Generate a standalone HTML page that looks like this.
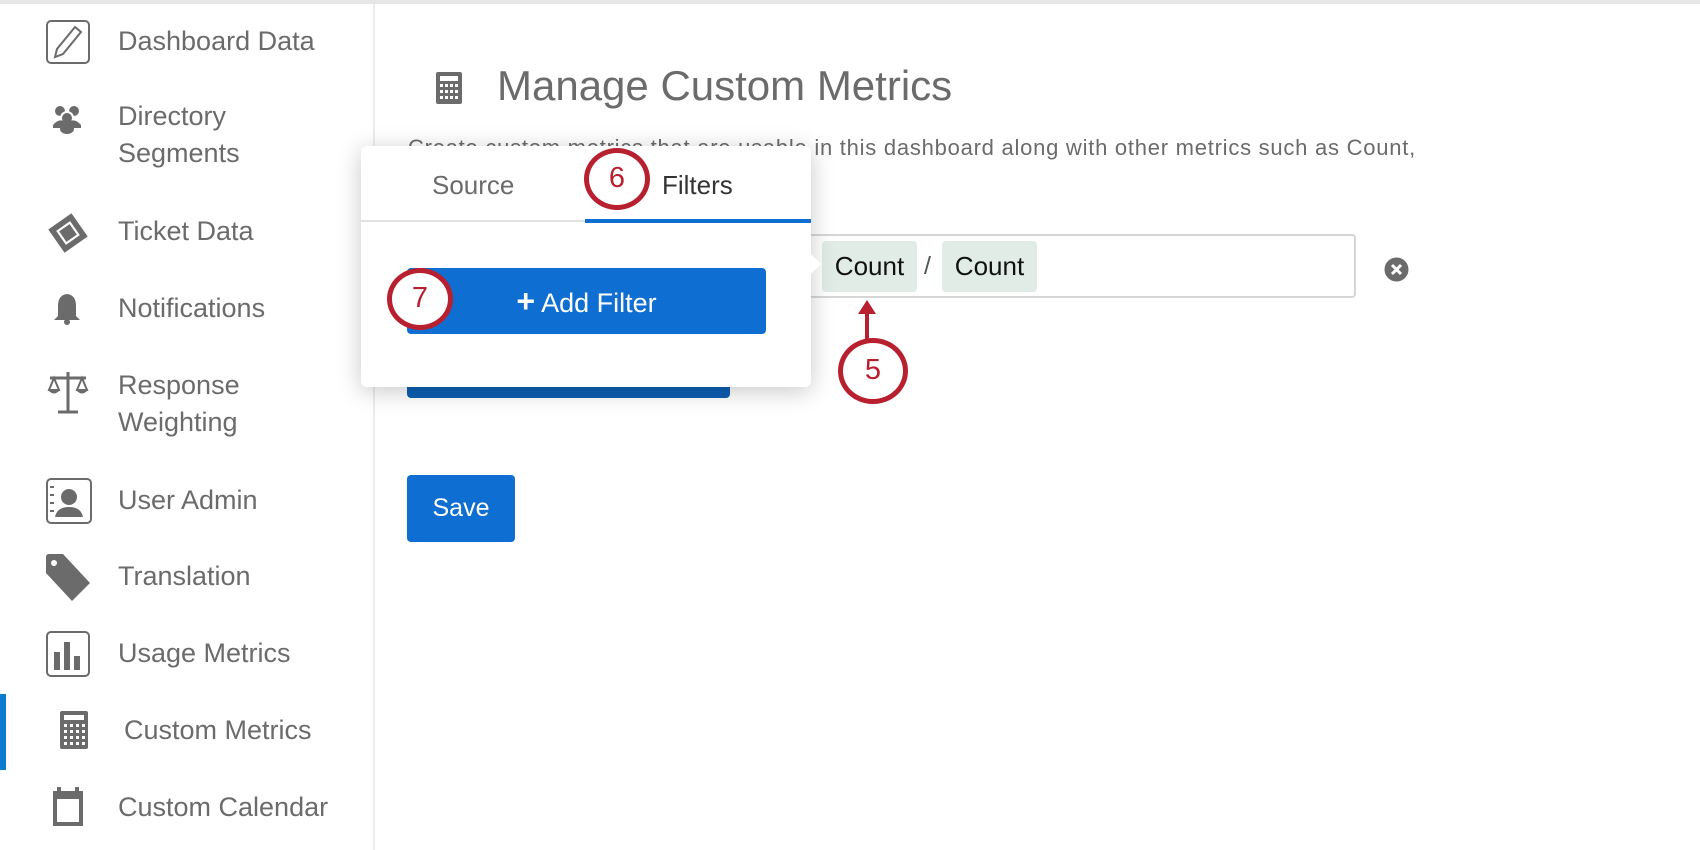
<!DOCTYPE html>
<html><head><meta charset="utf-8"><style>
*{box-sizing:border-box;margin:0;padding:0}
body{width:1700px;height:850px;overflow:hidden;background:#fff;font-family:"Liberation Sans",sans-serif;position:relative;color:#6b6b6b}
.top{position:absolute;left:0;top:0;width:1700px;height:4px;background:#e6e6e6}
.side{position:absolute;left:0;top:4px;width:375px;height:846px;border-right:2px solid #ececec;background:#fff}
.it{position:absolute;left:118px;font-size:27px;color:#6b6b6b;line-height:37px}
.ic{position:absolute}
.abs{position:absolute}
.btn{position:absolute;background:#0f6ed1;border-radius:4px;color:#fff}
.circ{position:absolute;border:5px solid #b81f2f;border-radius:50%;background:#fff;color:#b81f2f;font-size:29px;text-align:center}
</style></head><body>
<div class="top"></div>
<div class="side"></div>
<div class="abs" style="left:0;top:694px;width:6px;height:76px;background:#0a7bd0"></div>

<svg class="ic" style="left:45px;top:19px" width="46" height="46" viewBox="0 0 46 46"><rect x="2" y="2" width="42" height="42" rx="4" fill="none" stroke="#6b6b6b" stroke-width="2"/><path d="M30 8l6 5-18 22-8 3 2-8z" fill="none" stroke="#6b6b6b" stroke-width="2"/></svg>
<div class="it" style="top:23px">Dashboard Data</div>
<svg class="ic" style="left:51px;top:103px" width="32" height="32" viewBox="0 0 32 32"><circle cx="9" cy="8" r="5" fill="#6b6b6b"/><circle cx="23" cy="8" r="5" fill="#6b6b6b"/><circle cx="16" cy="15" r="6" fill="#6b6b6b" stroke="#fff" stroke-width="2"/><path d="M2 22q7-8 14-2 7-6 14 2v3H2z" fill="#6b6b6b"/><ellipse cx="16" cy="26" rx="7" ry="5" fill="#6b6b6b"/></svg>
<div class="it" style="top:98px">Directory<br>Segments</div>
<svg class="ic" style="left:44px;top:209px" width="48" height="48" viewBox="0 0 48 48"><g transform="rotate(10 24 24)"><path d="M4 24L24 4l20 20-20 20z" fill="#6b6b6b"/><path d="M12 24L24 12l12 12-12 12z" fill="#fff"/><path d="M15 24L24 15l9 9-9 9z" fill="#6b6b6b"/></g></svg>
<div class="it" style="top:213px">Ticket Data</div>
<svg class="ic" style="left:52px;top:292px" width="30" height="34" viewBox="0 0 30 34"><path d="M15 2q-9 1-9 12v10l-4 4h26l-4-4V14q0-11-9-12z" fill="#6b6b6b"/><circle cx="15" cy="30" r="3" fill="#6b6b6b"/></svg>
<div class="it" style="top:290px">Notifications</div>
<svg class="ic" style="left:46px;top:370px" width="44" height="46" viewBox="0 0 44 46"><path d="M22 2v40M12 42h20M4 8h36" stroke="#6b6b6b" stroke-width="3" fill="none"/><path d="M8 8l-5 12h10zM36 8l-5 12h10z" fill="none" stroke="#6b6b6b" stroke-width="2"/><path d="M2 20h12q-6 7-12 0zM30 20h12q-6 7-12 0z" fill="#6b6b6b"/></svg>
<div class="it" style="top:367px">Response<br>Weighting</div>
<svg class="ic" style="left:45px;top:477px" width="48" height="48" viewBox="0 0 48 48"><rect x="2" y="2" width="44" height="44" rx="4" fill="none" stroke="#6b6b6b" stroke-width="2"/><circle cx="24" cy="20" r="8" fill="#6b6b6b"/><path d="M10 40q2-10 14-10 12 0 14 10z" fill="#6b6b6b"/><path d="M5 10h4M5 18h4M5 26h4M5 34h4" stroke="#6b6b6b" stroke-width="2"/></svg>
<div class="it" style="top:482px">User Admin</div>
<svg class="ic" style="left:44px;top:553px" width="48" height="50" viewBox="0 0 48 50"><path d="M2 4q0-3 3-3h14l27 29-18 18L2 20z" fill="#6b6b6b"/><circle cx="10" cy="10" r="3" fill="#fff"/></svg>
<div class="it" style="top:558px">Translation</div>
<svg class="ic" style="left:45px;top:630px" width="46" height="48" viewBox="0 0 46 48"><rect x="2" y="2" width="42" height="44" rx="4" fill="none" stroke="#6b6b6b" stroke-width="2"/><rect x="9" y="22" width="6" height="18" fill="#6b6b6b"/><rect x="19" y="12" width="6" height="28" fill="#6b6b6b"/><rect x="29" y="26" width="6" height="14" fill="#6b6b6b"/></svg>
<div class="it" style="top:635px">Usage Metrics</div>
<svg class="ic" style="left:59px;top:710px" width="30" height="40" viewBox="0 0 30 40"><rect x="1" y="1" width="28" height="38" rx="2" fill="#6b6b6b"/><rect x="5" y="5" width="20" height="5" fill="#fff"/><g fill="#fff"><rect x="5" y="14" width="3" height="3"/><rect x="11" y="14" width="3" height="3"/><rect x="17" y="14" width="3" height="3"/><rect x="23" y="14" width="3" height="3"/><rect x="5" y="20" width="3" height="3"/><rect x="11" y="20" width="3" height="3"/><rect x="17" y="20" width="3" height="3"/><rect x="23" y="20" width="3" height="3"/><rect x="5" y="26" width="3" height="3"/><rect x="11" y="26" width="3" height="3"/><rect x="17" y="26" width="3" height="3"/><rect x="23" y="26" width="3" height="3"/><rect x="5" y="32" width="3" height="3"/><rect x="11" y="32" width="3" height="3"/><rect x="17" y="32" width="3" height="3"/><rect x="23" y="32" width="3" height="3"/></g></svg>
<div class="it" style="left:124px;top:712px">Custom Metrics</div>
<svg class="ic" style="left:52px;top:787px" width="32" height="40" viewBox="0 0 32 40"><rect x="1" y="4" width="30" height="35" fill="#6b6b6b"/><rect x="5" y="12" width="22" height="23" fill="#fff"/><rect x="5" y="0" width="4" height="7" fill="#6b6b6b"/><rect x="23" y="0" width="4" height="7" fill="#6b6b6b"/></svg>
<div class="it" style="top:789px">Custom Calendar</div>

<svg class="abs" style="left:436px;top:72px" width="26" height="32" viewBox="0 0 26 32"><rect width="26" height="32" rx="2" fill="#6b6b6b"/><rect x="4" y="4" width="18" height="5" fill="#fff"/><g fill="#fff"><rect x="4" y="12" width="3" height="3"/><rect x="9" y="12" width="3" height="3"/><rect x="14" y="12" width="3" height="3"/><rect x="19" y="12" width="3" height="3"/><rect x="4" y="18" width="3" height="3"/><rect x="9" y="18" width="3" height="3"/><rect x="14" y="18" width="3" height="3"/><rect x="19" y="18" width="3" height="3"/><rect x="4" y="24" width="3" height="3"/><rect x="9" y="24" width="3" height="3"/><rect x="14" y="24" width="3" height="3"/><rect x="19" y="24" width="3" height="3"/></g></svg>
<div class="abs" style="left:497px;top:62px;font-size:42px;color:#6b6b6b">Manage Custom Metrics</div>
<div class="abs" style="left:408px;top:135px;font-size:22px;letter-spacing:0.75px;color:#6b6b6b">Create custom metrics that are usable in this dashboard along with other metrics such as Count,</div>

<div class="abs" style="left:808px;top:234px;width:548px;height:64px;border:2px solid #d6d6d6;border-radius:4px;background:#fff"></div>
<div class="abs" style="left:822px;top:241px;width:95px;height:51px;background:#e0ece5;border-radius:4px;font-size:26px;color:#111;line-height:51px;text-align:center">Count</div>
<div class="abs" style="left:924px;top:241px;font-size:25px;color:#555;line-height:51px">/</div>
<div class="abs" style="left:942px;top:241px;width:95px;height:51px;background:#e0ece5;border-radius:4px;font-size:26px;color:#111;line-height:51px;text-align:center">Count</div>
<svg class="abs" style="left:1384px;top:257px" width="25" height="25" viewBox="0 0 25 25"><circle cx="12.5" cy="12.5" r="12" fill="#6b6b6b"/><path d="M8 8l9 9M17 8l-9 9" stroke="#fff" stroke-width="3"/></svg>

<div class="btn" style="left:407px;top:360px;width:323px;height:38px;background:#0d5fb3"></div>
<div class="btn" style="left:407px;top:475px;width:108px;height:67px;font-size:25px;line-height:67px;text-align:center">Save</div>

<div class="abs" style="left:361px;top:146px;width:450px;height:241px;background:#fff;border-radius:6px;box-shadow:0 4px 24px rgba(0,0,0,.22)"></div>
<div class="abs" style="left:804px;top:257px;width:14px;height:14px;background:#fff;transform:rotate(45deg)"></div>
<div class="abs" style="left:361px;top:220px;width:450px;height:2px;background:#e2e2e2"></div>
<div class="abs" style="left:585px;top:219px;width:226px;height:4px;background:#0f6ed1"></div>
<div class="abs" style="left:432px;top:170px;font-size:26px;color:#6b6b6b">Source</div>
<div class="abs" style="left:662px;top:170px;font-size:26px;color:#333">Filters</div>
<div class="btn" style="left:407px;top:268px;width:359px;height:66px;font-size:27px;line-height:66px;text-align:center"><b style="font-size:32px">+</b> Add Filter</div>

<div class="circ" style="left:584px;top:148px;width:66px;height:62px;line-height:50px">6</div>
<div class="circ" style="left:387px;top:268px;width:66px;height:62px;line-height:50px">7</div>
<svg class="abs" style="left:855px;top:298px" width="24" height="42" viewBox="0 0 24 42"><path d="M12 12v30" stroke="#b81f2f" stroke-width="4"/><path d="M3 16L12 2l9 14z" fill="#b81f2f"/></svg>
<div class="circ" style="left:838px;top:338px;width:70px;height:66px;line-height:54px">5</div>
</body></html>
